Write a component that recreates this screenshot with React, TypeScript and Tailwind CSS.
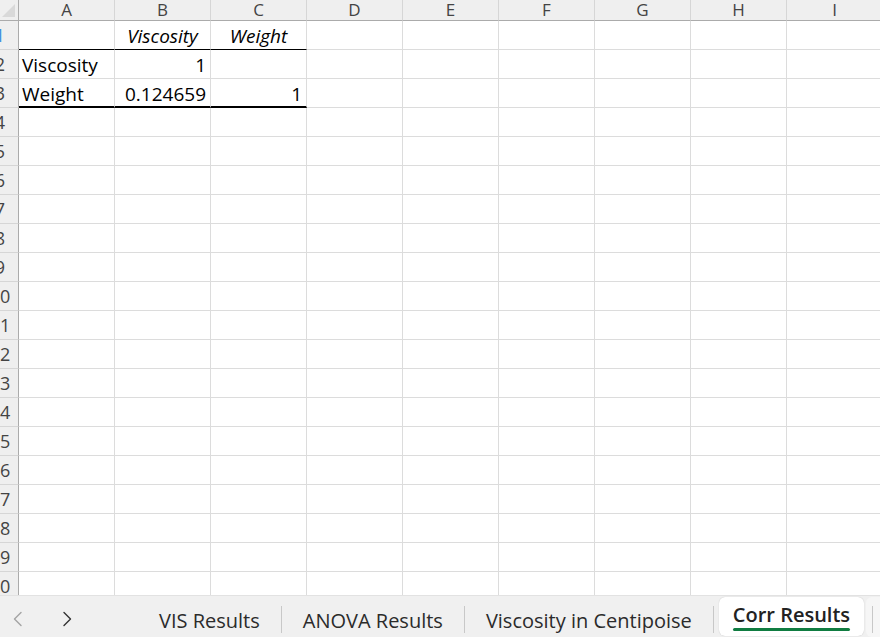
import React from 'react'

const cols = ['A', 'B', 'C', 'D', 'E', 'F', 'G', 'H', 'I']
const rowCount = 20

type Cell = { text: string; align?: 'left' | 'right' | 'center'; italic?: boolean }

// sheet contents, keyed by "col+row"
const data: Record<string, Cell> = {
  B1: { text: 'Viscosity', align: 'center', italic: true },
  C1: { text: 'Weight', align: 'center', italic: true },
  A2: { text: 'Viscosity' },
  B2: { text: '1', align: 'right' },
  A3: { text: 'Weight' },
  B3: { text: '0.124659', align: 'right' },
  C3: { text: '1', align: 'right' },
}

function Chevron({ dir, color }: { dir: 'left' | 'right'; color: string }) {
  return (
    <svg width="12" height="16" viewBox="0 0 12 16" fill="none">
      <polyline
        points={dir === 'left' ? '9,1.5 2.5,8 9,14.5' : '3,1.5 9.5,8 3,14.5'}
        stroke={color}
        strokeWidth="1.4"
        strokeLinecap="round"
        strokeLinejoin="round"
      />
    </svg>
  )
}

function Separator() {
  return <div className="w-px h-[27px] mt-[10px] bg-[#c8c8c8]" />
}

function Tab({ label }: { label: string }) {
  return (
    <div className="px-[21px] mt-[11px] text-[20px] leading-[28px] text-[#2b2b2b] whitespace-nowrap">
      {label}
    </div>
  )
}

export default function App() {
  const rows = Array.from({ length: rowCount }, (_, i) => i + 1)

  return (
    <div className="w-[880px] h-[637px] overflow-hidden bg-white flex flex-col font-['Open_Sans',sans-serif]">
      {/* grid */}
      <div className="h-[595px] overflow-hidden shrink-0">
        {/* column header */}
        <div className="flex h-[21px]">
          <div className="w-[19px] shrink-0 bg-[#efefef] border-r border-b border-[#ababab] relative">
            <svg width="18" height="20" viewBox="0 0 18 20" className="absolute left-0 top-0">
              <polygon points="15,4 15,17 2,17" fill="#d9d9d9" />
            </svg>
          </div>
          {cols.map((c) => (
            <div
              key={c}
              className="w-[96px] shrink-0 bg-[#efefef] border-r border-r-[#d6d6d6] border-b border-b-[#ababab] text-center text-[17px] leading-[20px] text-[#444]"
            >
              {c}
            </div>
          ))}
        </div>

        {rows.map((r) => (
          <div key={r} className="flex h-[29px]">
            <div className="w-[19px] shrink-0 bg-[#efefef] border-r border-r-[#ababab] border-b border-b-[#d6d6d6] overflow-hidden">
              <div
                className={`w-[36px] -ml-[18px] text-center text-[18px] leading-[28px] ${
                  r === 1 ? 'text-[#3d8fe0]' : 'text-[#444]'
                }`}
              >
                {r}
              </div>
            </div>
            {cols.map((c, ci) => {
              const key = `${c}${r}`
              const cell = data[key]
              const inTable = ci < 3
              let bottom = 'border-b border-b-[#dcdcdc]'
              if (inTable && r === 1) bottom = 'border-b border-b-black'
              if (inTable && r === 3) bottom = 'border-b-2 border-b-black'
              const align =
                cell?.align === 'right'
                  ? 'text-right pr-[4px]'
                  : cell?.align === 'center'
                    ? 'text-center'
                    : 'text-left pl-[3px]'
              return (
                <div
                  key={key}
                  className={`w-[96px] shrink-0 border-r border-r-[#dcdcdc] ${bottom} whitespace-nowrap pt-[2px] text-[19px] leading-[26px] text-black ${align} ${
                    cell?.italic ? 'italic' : ''
                  }`}
                >
                  {cell?.text}
                </div>
              )
            })}
          </div>
        ))}
      </div>

      {/* sheet tabs */}
      <div className="flex-1 flex bg-[#f0f0f0] border-t border-[#e2e2e2]">
        <div className="w-[138px] shrink-0 flex items-start pt-[15px]">
          <div className="ml-[12px]">
            <Chevron dir="left" color="#a3a3a3" />
          </div>
          <div className="ml-[37px]">
            <Chevron dir="right" color="#333" />
          </div>
        </div>
        <Tab label="VIS Results" />
        <Separator />
        <Tab label="ANOVA Results" />
        <Separator />
        <Tab label="Viscosity in Centipoise" />
        <Separator />
        <div className="ml-[5px] mt-[1px] mb-[1px] px-[14px] bg-white rounded-[6px] shadow-[0_0_1px_rgba(0,0,0,0.25)] flex flex-col items-start">
          <div className="mt-[5px] flex flex-col">
            <span className="text-[20px] leading-[26px] font-semibold text-[#222] whitespace-nowrap">
              Corr Results
            </span>
            <div className="h-[3px] bg-[#107c41] rounded-full" />
          </div>
        </div>
        <div className="ml-[2px] mt-[1px] flex-1 bg-[#f6f6f6] rounded-l-[6px] flex">
          <div className="ml-[6px] w-px h-[27px] mt-[9px] bg-[#c8c8c8]" />
        </div>
      </div>
    </div>
  )
}
